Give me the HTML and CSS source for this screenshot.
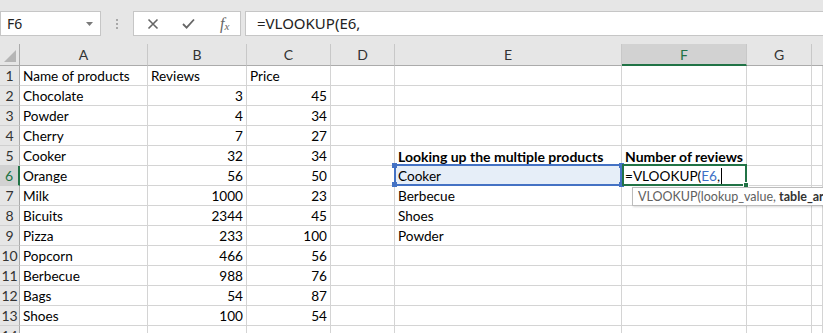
FILE: index.html
```html
<!DOCTYPE html>
<html lang="en">

<head>
    <meta charset="UTF-8">
    <title>VLOOKUP</title>
    <link rel="stylesheet" href="styles.css">
</head>

<body>
    <div class="fbar">
        <div class="namebox">
            <span>F6</span>
            <svg class="caret" width="7" height="4" viewBox="0 0 7 4"><path d="M0 0h7L3.5 4z" fill="#7a7a7a"/></svg>
        </div>
        <div class="grip"><i></i><i></i><i></i></div>
        <div class="btns">
            <svg width="12" height="12" viewBox="0 0 12 12"><path d="M1.5 1.5l9 9M10.5 1.5l-9 9" stroke="#666" stroke-width="1.6"/></svg>
            <svg width="13" height="11" viewBox="0 0 13 11"><path d="M1 6l3.6 3.6L12 1.5" stroke="#666" stroke-width="1.8" fill="none"/></svg>
            <span class="fx">f<sub>x</sub></span>
        </div>
        <div class="formula">=VLOOKUP(E6,</div>
    </div>

    <div class="grid">
        <div class="corner"><i></i></div>
        <div class="hd">A</div>
        <div class="hd">B</div>
        <div class="hd">C</div>
        <div class="hd">D</div>
        <div class="hd">E</div>
        <div class="hd hd-sel">F</div>
        <div class="hd">G</div>
        <div class="hd last"></div>

        <div class="rh">1</div>
        <div class="c">Name of products</div>
        <div class="c">Reviews</div>
        <div class="c">Price</div>
        <div class="c"></div><div class="c"></div><div class="c"></div><div class="c"></div><div class="c"></div>

        <div class="rh">2</div>
        <div class="c">Chocolate</div>
        <div class="c num">3</div>
        <div class="c num">45</div>
        <div class="c"></div><div class="c"></div><div class="c"></div><div class="c"></div><div class="c"></div>

        <div class="rh">3</div>
        <div class="c">Powder</div>
        <div class="c num">4</div>
        <div class="c num">34</div>
        <div class="c"></div><div class="c"></div><div class="c"></div><div class="c"></div><div class="c"></div>

        <div class="rh">4</div>
        <div class="c">Cherry</div>
        <div class="c num">7</div>
        <div class="c num">27</div>
        <div class="c"></div><div class="c"></div><div class="c"></div><div class="c"></div><div class="c"></div>

        <div class="rh">5</div>
        <div class="c">Cooker</div>
        <div class="c num">32</div>
        <div class="c num">34</div>
        <div class="c"></div>
        <div class="c bold">Looking up the multiple products</div>
        <div class="c bold">Number of reviews</div>
        <div class="c"></div><div class="c"></div>

        <div class="rh rh-sel">6</div>
        <div class="c">Orange</div>
        <div class="c num">56</div>
        <div class="c num">50</div>
        <div class="c"></div>
        <div class="c range">Cooker
            <span class="range-box"><b class="tl"></b><b class="tr"></b><b class="bl"></b><b class="br"></b></span>
        </div>
        <div class="c active">=VLOOKUP(<span class="ref">E6</span>,<span class="cursor"></span>
            <span class="active-box"><b></b></span>
            <span class="tip">VLOOKUP(lookup_value, <strong>table_array</strong>, col_index_num, [range_lookup])</span>
        </div>
        <div class="c"></div><div class="c"></div>

        <div class="rh">7</div>
        <div class="c">Milk</div>
        <div class="c num">1000</div>
        <div class="c num">23</div>
        <div class="c"></div>
        <div class="c">Berbecue</div>
        <div class="c"></div><div class="c"></div><div class="c"></div>

        <div class="rh">8</div>
        <div class="c">Bicuits</div>
        <div class="c num">2344</div>
        <div class="c num">45</div>
        <div class="c"></div>
        <div class="c">Shoes</div>
        <div class="c"></div><div class="c"></div><div class="c"></div>

        <div class="rh">9</div>
        <div class="c">Pizza</div>
        <div class="c num">233</div>
        <div class="c num">100</div>
        <div class="c"></div>
        <div class="c">Powder</div>
        <div class="c"></div><div class="c"></div><div class="c"></div>

        <div class="rh">10</div>
        <div class="c">Popcorn</div>
        <div class="c num">466</div>
        <div class="c num">56</div>
        <div class="c"></div><div class="c"></div><div class="c"></div><div class="c"></div><div class="c"></div>

        <div class="rh">11</div>
        <div class="c">Berbecue</div>
        <div class="c num">988</div>
        <div class="c num">76</div>
        <div class="c"></div><div class="c"></div><div class="c"></div><div class="c"></div><div class="c"></div>

        <div class="rh">12</div>
        <div class="c">Bags</div>
        <div class="c num">54</div>
        <div class="c num">87</div>
        <div class="c"></div><div class="c"></div><div class="c"></div><div class="c"></div><div class="c"></div>

        <div class="rh">13</div>
        <div class="c">Shoes</div>
        <div class="c num">100</div>
        <div class="c num">54</div>
        <div class="c"></div><div class="c"></div><div class="c"></div><div class="c"></div><div class="c"></div>

        <div class="rh">14</div>
        <div class="c"></div><div class="c"></div><div class="c"></div><div class="c"></div>
        <div class="c"></div><div class="c"></div><div class="c"></div><div class="c"></div>
    </div>
</body>

</html>
```

FILE: styles.css
```css
* {
    box-sizing: border-box;
}

html,
body {
    margin: 0;
    padding: 0;
}

body {
    width: 823px;
    height: 333px;
    overflow: hidden;
    background-color: #e6e6e6;
    font-family: Lato, "Liberation Sans", sans-serif;
}

/* formula bar */

.fbar {
    display: flex;
    height: 36px;
    padding-top: 11px;
    font-family: "Noto Sans", "Open Sans", sans-serif;
    font-size: 14px;
    color: #222;
}

.namebox {
    width: 101px;
    height: 25px;
    background-color: #fff;
    border: 1px solid #c6c6c6;
    display: flex;
    align-items: center;
    justify-content: space-between;
    padding: 0 7px 0 6px;
}

.grip {
    width: 32px;
    display: flex;
    flex-direction: column;
    align-items: center;
    justify-content: center;
    gap: 2px;
}

.grip i {
    width: 2px;
    height: 2px;
    background-color: #a8a8a8;
}

.btns {
    width: 108px;
    height: 25px;
    background-color: #fff;
    border: 1px solid #c6c6c6;
    display: flex;
    align-items: center;
    padding-left: 13px;
    gap: 23px;
}

.fx {
    font-family: "Liberation Serif", serif;
    font-style: italic;
    font-size: 16px;
    color: #666;
    margin-left: 2px;
}

.fx sub {
    font-size: 11px;
    vertical-align: -1px;
}

.formula {
    flex: 1;
    height: 25px;
    margin: 0 -2px 0 4px;
    background-color: #fff;
    border: 1px solid #c6c6c6;
    padding-left: 11px;
    font-size: 15px;
    line-height: 23px;
}

/* sheet */

.grid {
    margin-top: 8px;
    display: grid;
    grid-template-columns: 20px 128px 99px 84px 64px 227px 125px 65px 1fr;
    grid-template-rows: 22px repeat(14, 20px);
    background-color: #fff;
}

.corner {
    position: relative;
    background-color: #e6e6e6;
    border-right: 1px solid #ababab;
    border-bottom: 1px solid #ababab;
}

.corner i {
    position: absolute;
    right: 3px;
    bottom: 3px;
    width: 0;
    height: 0;
    border-left: 12px solid transparent;
    border-bottom: 12px solid #b5b5b5;
}

.hd {
    background-color: #e6e6e6;
    border-right: 1px solid #c8c8c8;
    border-bottom: 1px solid #ababab;
    text-align: center;
    font-size: 14px;
    line-height: 22px;
    color: #333;
}

.hd.last {
    border-right: 0;
}

.hd-sel {
    background-color: #d2d2d2;
    color: #217346;
    border-bottom: 2px solid #217346;
}

.rh {
    background-color: #e6e6e6;
    border-right: 1px solid #ababab;
    border-bottom: 1px solid #d0d0d0;
    text-align: center;
    font-size: 14px;
    line-height: 20px;
    color: #333;
}

.rh-sel {
    background-color: #d2d2d2;
    color: #217346;
    border-right: 2px solid #217346;
}

.c {
    border-right: 1px solid #d4d4d4;
    border-bottom: 1px solid #d4d4d4;
    padding: 0 3px;
    font-size: 13.6px;
    line-height: 21px;
    color: #000;
    white-space: nowrap;
}

.num {
    text-align: right;
}

.bold {
    font-weight: bold;
    font-size: 14px;
}

/* referenced range E6 */

.range {
    position: relative;
    background-color: #e6eef8;
}

.range-box {
    position: absolute;
    top: -2px;
    left: -1px;
    right: -1px;
    bottom: -1px;
    border: 2px solid #4472c4;
}

.range-box b {
    position: absolute;
    width: 5px;
    height: 5px;
    background-color: #4472c4;
}

.range-box .tl {
    left: -4px;
    top: -3px;
}

.range-box .tr {
    right: -4px;
    top: -3px;
}

.range-box .bl {
    left: -4px;
    bottom: -3px;
}

.range-box .br {
    right: -4px;
    bottom: -3px;
}

/* active cell F6 */

.active {
    position: relative;
    z-index: 2;
}

.ref {
    color: #3d6fc6;
}

.cursor {
    display: inline-block;
    width: 1px;
    height: 16px;
    margin-left: 1px;
    background-color: #000;
    vertical-align: -3px;
}

.active-box {
    position: absolute;
    top: -2px;
    left: 0;
    right: -1px;
    bottom: -1px;
    border: 2px solid #217346;
}

.active-box b {
    position: absolute;
    right: -4px;
    bottom: -4px;
    width: 6px;
    height: 6px;
    background-color: #217346;
    border: 1px solid #fff;
}

.tip {
    position: absolute;
    top: 21px;
    left: 10px;
    height: 19px;
    padding: 0 6px 0 5px;
    background-color: #fff;
    border: 1px solid #bcbcbc;
    box-shadow: 1px 1px 2px rgba(0, 0, 0, 0.15);
    font-size: 12.5px;
    line-height: 17px;
    color: #606060;
}

.tip strong {
    color: #333;
}
```
